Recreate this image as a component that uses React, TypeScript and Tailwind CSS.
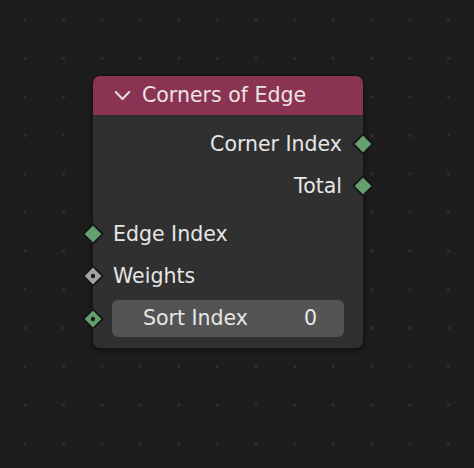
import React from "react";

const font = { fontFamily: '"DejaVu Sans", "Liberation Sans", sans-serif' };

function Socket({ side, color, dot }: { side: "left" | "right"; color: string; dot?: boolean }) {
  return (
    <svg
      width="22"
      height="22"
      viewBox="0 0 22 22"
      className={`absolute top-1/2 -translate-y-1/2 ${side === "left" ? "-left-[11px]" : "-right-[11px]"}`}
    >
      <polygon points="11,1.3 20.7,11 11,20.7 1.3,11" fill={color} stroke="#171717" strokeWidth="1.8" strokeLinejoin="round" />
      {dot && <circle cx="11" cy="11" r="2.2" fill="#1a1a1a" />}
    </svg>
  );
}

export default function App() {
  return (
    <div
      className="w-[474px] h-[468px] bg-[#1d1d1d] bg-[radial-gradient(circle,#2e2e2e_1.3px,transparent_1.8px)] bg-[size:38.5px_38.5px] bg-[position:5.75px_0.75px] pl-[93px] pt-[76px]"
      style={font}
    >
      <div className="w-[270px] rounded-[7px] shadow-[0_0_0_1px_#141414,0_2px_6px_rgba(0,0,0,0.5)]">
        <div className="h-[39px] bg-[#8a3352] rounded-t-[7px] flex items-center pl-[21px]">
          <svg width="17" height="12" viewBox="0 0 17 12" className="mr-[11px]">
            <path d="M1.8 2 L8.5 9 L15.2 2" fill="none" stroke="#eadde3" strokeWidth="2" strokeLinecap="round" strokeLinejoin="round" />
          </svg>
          <span className="text-[20.5px] text-[#ece3e7] leading-none">Corners of Edge</span>
        </div>
        <div className="bg-[#303030] rounded-b-[7px] pt-[8px] pb-[8px] flex flex-col">
          <div className="relative h-[42px] flex items-center justify-end pr-[21px] text-[20.5px] text-[#e6e6e6]">
            Corner Index
            <Socket side="right" color="#63a06d" />
          </div>
          <div className="relative h-[42px] flex items-center justify-end pr-[21px] text-[20.5px] text-[#e6e6e6]">
            Total
            <Socket side="right" color="#63a06d" />
          </div>
          <div className="h-[6px]" />
          <div className="relative h-[42px] flex items-center pl-[20px] text-[20.5px] text-[#e6e6e6]">
            Edge Index
            <Socket side="left" color="#63a06d" />
          </div>
          <div className="relative h-[42px] flex items-center pl-[20px] text-[20.5px] text-[#e6e6e6]">
            Weights
            <Socket side="left" color="#a3a3a3" dot />
          </div>
          <div className="relative h-[43px] flex items-center px-[19px]">
            <div className="w-full h-[37px] rounded-[6px] bg-[#545454] flex items-center justify-between pl-[31px] pr-[27px] text-[20.5px] text-[#e6e6e6]">
              <span>Sort Index</span>
              <span>0</span>
            </div>
            <Socket side="left" color="#63a06d" dot />
          </div>
        </div>
      </div>
    </div>
  );
}
